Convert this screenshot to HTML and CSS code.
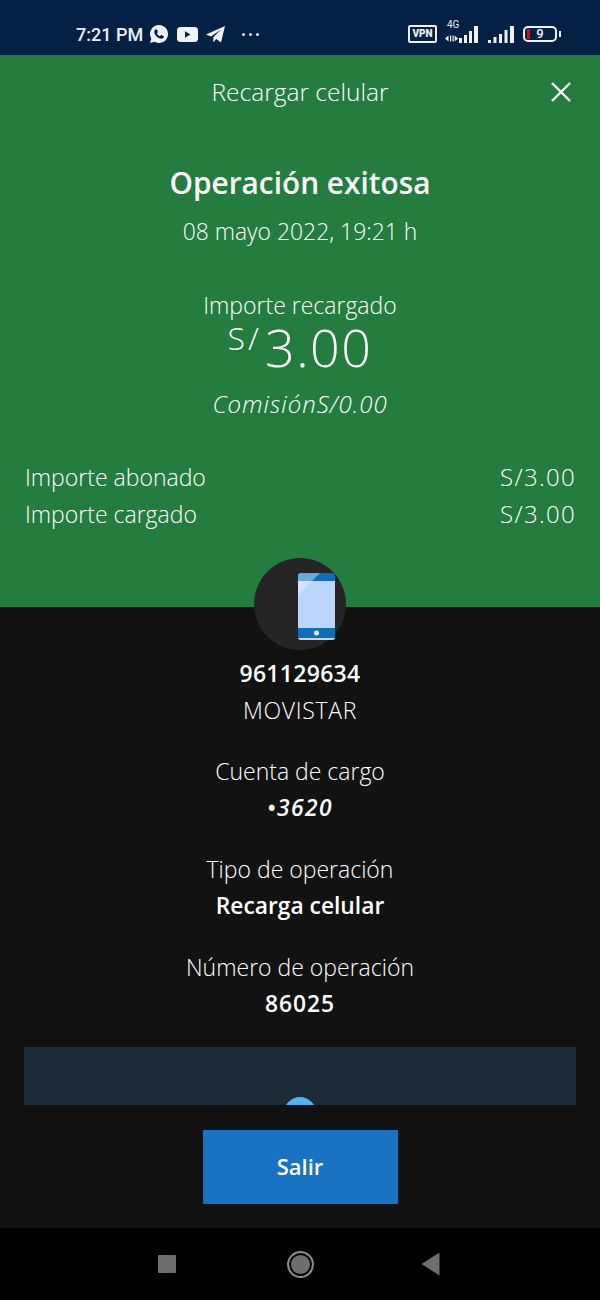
FILE: index.html
```html
<!DOCTYPE html>
<html lang="es">
  <head>
    <meta charset="UTF-8" />
    <meta name="viewport" content="width=device-width, initial-scale=1.0" />
    <title>Recargar celular</title>
    <link rel="stylesheet" href="styles.css">
  </head>
  <body>
    <div class="status-bar">
      <div class="status-left">
        <span class="clock">7:21 PM</span>
        <svg class="ic-whatsapp" width="20" height="20" viewBox="0 0 20 20">
          <path fill="#eef1f6" d="M10 1a9 9 0 0 0-7.700 13.600L1 19l4.500-1.200A9 9 0 1 0 10 1z"/>
          <path fill="#042045" d="M7 5.200c-.5 0-1.700.8-1.700 2.500 0 3 3.700 7 7 7 1.600 0 2.500-1.200 2.500-1.800 0-.4-.1-.7-.4-.9l-1.900-1c-.3-.1-.6 0-.8.3l-.7.9c-1.300-.4-2.600-1.700-3.100-3l.8-.7c.2-.2.3-.5.2-.8l-.9-1.900c-.1-.4-.5-.6-1-.6z"/>
        </svg>
        <svg class="ic-youtube" width="21" height="15" viewBox="0 0 21 15">
          <rect width="21" height="15" rx="3.500" fill="#eef1f6"/>
          <path fill="#042045" d="M8 4.200v6.600l5.500-3.300z"/>
        </svg>
        <svg class="ic-telegram" width="19" height="17" viewBox="0 0 19 17">
          <path fill="#eef1f6" d="M19 0L0 8.400l5 2.100L15 3.500 7.300 11.300v5l3-3.200 4.700 3.400z"/>
        </svg>
        <span class="dots"><i></i><i></i><i></i></span>
      </div>
      <div class="status-right">
        <span class="vpn">VPN</span>
        <div class="net">
          <span class="net-label">4G</span>
          <svg width="35" height="19" viewBox="0 0 35 19">
            <path fill="#eef1f6" d="M0 13.500l3.500-3v6zM5 10.500h1.200v6H5zM7.500 10.500h1.200v6H7.500zM9.700 10.500l3.300 3-3.300 3zM14 13h3v5h-3zM19 10h3v8h-3zM24 6h3v12h-3zM29 1h4v17h-4z"/>
          </svg>
        </div>
        <svg class="signal" width="27" height="19" viewBox="0 0 27 19">
          <path fill="#eef1f6" d="M0 15h3v3H0zM5.500 12h3v6h-3zM11 9h3v9h-3zM16.500 5h3v13h-3zM22 1h4v17h-4z"/>
        </svg>
        <div class="battery">
          <span class="battery-body"><i class="battery-level"></i>9</span>
          <i class="battery-tip"></i>
        </div>
      </div>
    </div>

    <section class="summary">
      <header class="summary-head">
        <span class="head-title">Recargar celular</span>
        <svg class="close" width="22" height="22" viewBox="0 0 22 22">
          <path stroke="#fff" stroke-width="2.400" fill="none" d="M2 2l18 18M20 2L2 20"/>
        </svg>
      </header>
      <h1 class="title">Operación exitosa</h1>
      <p class="date">08 mayo 2022, 19:21 h</p>
      <p class="amount-label">Importe recargado</p>
      <p class="amount"><span class="currency">S/</span>3.00</p>
      <p class="fee">ComisiónS/0.00</p>
      <dl class="rows">
        <div class="row"><dt>Importe abonado</dt><dd>S/3.00</dd></div>
        <div class="row"><dt>Importe cargado</dt><dd>S/3.00</dd></div>
      </dl>
    </section>

    <main class="details">
      <div class="scroll">
        <div class="avatar">
          <svg class="phone" width="37" height="67" viewBox="0 0 37 67">
            <rect width="37" height="67" rx="3" fill="#106eb8"/>
            <rect y="8" width="37" height="47" fill="#bcd6fb"/>
            <path fill="#6aa7dc" d="M0 3a3 3 0 0 1 3-3h19L14 8H0z"/>
            <path fill="#d2e3fb" d="M0 8h14L0 22z"/>
            <path fill="#bcd6fb" d="M0 65h37a3 3 0 0 1-3 2H3a3 3 0 0 1-3-2z"/>
            <circle cx="18.500" cy="60" r="2.500" fill="#e6f1ff"/>
          </svg>
        </div>
        <p class="phone-number">961129634</p>
        <p class="carrier">MOVISTAR</p>
        <div class="info">
          <p class="info-label">Cuenta de cargo</p>
          <p class="info-value account">•3620</p>
        </div>
        <div class="info">
          <p class="info-label">Tipo de operación</p>
          <p class="info-value">Recarga celular</p>
        </div>
        <div class="info">
          <p class="info-label">Número de operación</p>
          <p class="info-value op-number">86025</p>
        </div>
        <div class="banner"><i class="banner-icon"></i></div>
      </div>
      <div class="actions">
        <button class="btn-exit">Salir</button>
      </div>
    </main>

    <nav class="nav-bar">
      <i class="nav-square"></i>
      <i class="nav-circle"></i>
      <i class="nav-back"></i>
    </nav>
  </body>
</html>
```

FILE: styles.css
```css
* {
  margin: 0;
  padding: 0;
  box-sizing: border-box;
}
body {
  display: flex;
  flex-direction: column;
  height: 1300px;
  overflow: hidden;
  background: #121212;
  color: #fff;
  font-family: "Open Sans", "Liberation Sans", sans-serif;
  font-weight: 300;
}

/* status bar */
.status-bar {
  display: flex;
  justify-content: space-between;
  align-items: center;
  height: 55px;
  padding: 13px 39px 0 76px;
  background: #042045;
  color: #eef1f6;
}
.status-left,
.status-right {
  display: flex;
  align-items: center;
}
.clock {
  font-family: Roboto, sans-serif;
  font-size: 18px;
  font-weight: 500;
  margin-right: 6px;
}
.ic-youtube {
  margin-left: 8px;
}
.ic-telegram {
  margin-left: 8px;
}
.dots {
  display: flex;
  gap: 4px;
  margin-left: 17px;
}
.dots i {
  width: 3px;
  height: 3px;
  border-radius: 50%;
  background: #eef1f6;
}
.vpn {
  width: 29px;
  height: 18px;
  border: 2px solid #eef1f6;
  border-radius: 2px;
  font-family: Roboto, sans-serif;
  font-size: 10px;
  font-weight: 900;
  line-height: 14px;
  text-align: center;
}
.net {
  position: relative;
  width: 35px;
  height: 19px;
  margin-left: 8px;
}
.net-label {
  position: absolute;
  top: -6px;
  left: 2px;
  font-family: Roboto, sans-serif;
  font-size: 10px;
  font-weight: 400;
}
.signal {
  margin-left: 8px;
}
.battery {
  display: flex;
  align-items: center;
  margin-left: 8px;
}
.battery-body {
  position: relative;
  width: 34px;
  height: 16px;
  border: 2px solid #eef1f6;
  border-radius: 5px;
  font-family: Roboto, sans-serif;
  font-size: 13px;
  font-weight: 500;
  line-height: 12px;
  text-align: center;
}
.battery-level {
  position: absolute;
  top: 1px;
  left: 2px;
  width: 3px;
  height: 10px;
  background: #c4141e;
}
.battery-tip {
  width: 2px;
  height: 6px;
  margin-left: 2px;
  background: #eef1f6;
}

/* green part */
.summary {
  height: 552px;
  background: #247c3e;
  text-align: center;
}
.summary-head {
  position: relative;
  height: 74px;
  font-size: 24.500px;
  line-height: 73px;
}
.close {
  position: absolute;
  top: 26px;
  right: 28px;
}
.title {
  margin-top: 34px;
  font-size: 29.800px;
  font-weight: 600;
  line-height: 40px;
}
.date {
  margin-top: 14px;
  font-size: 22.900px;
  line-height: 30px;
}
.amount-label {
  margin-top: 43px;
  font-size: 23px;
  line-height: 30px;
}
.amount {
  margin-top: -3px;
  font-size: 52px;
  letter-spacing: 1.500px;
  line-height: 60px;
}
.currency {
  position: relative;
  top: -17px;
  margin-right: 3px;
  font-size: 32px;
  letter-spacing: 3px;
}
.fee {
  margin-top: 4px;
  font-size: 24px;
  font-style: italic;
  letter-spacing: 1px;
  line-height: 30px;
}
.rows {
  margin-top: 40px;
  padding: 0 24px 0 25px;
  font-size: 23px;
  line-height: 36.500px;
}
.row {
  display: flex;
  justify-content: space-between;
}
.row dd {
  margin: 0;
  font-size: 24px;
  letter-spacing: 1.300px;
}

/* dark part */
.details {
  flex: 1;
  display: flex;
  flex-direction: column;
  min-height: 0;
}
.scroll {
  position: relative;
  height: 498px;
  text-align: center;
}
.avatar {
  position: relative;
  display: flex;
  align-items: center;
  justify-content: flex-end;
  width: 92px;
  height: 92px;
  margin: -49px auto 0;
  padding: 4px 11px 0 0;
  border-radius: 50%;
  background: #252525;
}
.phone-number {
  margin-top: 8px;
  font-size: 23px;
  font-weight: 600;
  letter-spacing: .3px;
  line-height: 30px;
}
.carrier {
  margin-top: 7px;
  font-size: 23px;
  letter-spacing: .7px;
  line-height: 30px;
}
.info {
  margin-top: 31px;
}
.info-label {
  font-size: 23px;
  line-height: 30px;
}
.info-value {
  margin-top: 7px;
  font-size: 22.800px;
  font-weight: 600;
  line-height: 30px;
}
.info + .info {
  margin-top: 31px;
}
.account {
  font-style: italic;
  letter-spacing: 1.400px;
}
.op-number {
  letter-spacing: 1px;
}
.banner {
  display: flex;
  justify-content: center;
  align-items: flex-start;
  height: 58px;
  margin: 28px 24px 0;
  padding-top: 50px;
  overflow: hidden;
  background: #1c2c38;
}
.banner-icon {
  flex: none;
  width: 32px;
  height: 32px;
  border-radius: 50%;
  background: #53b4f5;
}
.actions {
  display: flex;
  justify-content: center;
  padding-top: 25px;
}
.btn-exit {
  width: 195px;
  height: 74px;
  padding-bottom: 3px;
  border: 0;
  border-radius: 1px;
  background: #1a72c2;
  color: #fff;
  font-family: inherit;
  font-size: 22px;
  font-weight: 600;
}

/* android nav */
.nav-bar {
  display: flex;
  justify-content: center;
  align-items: center;
  gap: 110px;
  height: 72px;
  background: #000;
}
.nav-square {
  width: 18px;
  height: 18px;
  margin: 0 1px 0 -1px;
  border-radius: 1px;
  background: #6f6f6f;
}
.nav-circle {
  width: 27px;
  height: 27px;
  border: 2px solid #8c8c8c;
  border-radius: 50%;
  background: #6f6f6f;
  box-shadow: inset 0 0 0 2px #000;
}
.nav-back {
  width: 18px;
  height: 23px;
  margin: 0 2px 0 -2px;
  background: #6f6f6f;
  clip-path: polygon(100% 0, 100% 100%, 0 50%);
}
```
